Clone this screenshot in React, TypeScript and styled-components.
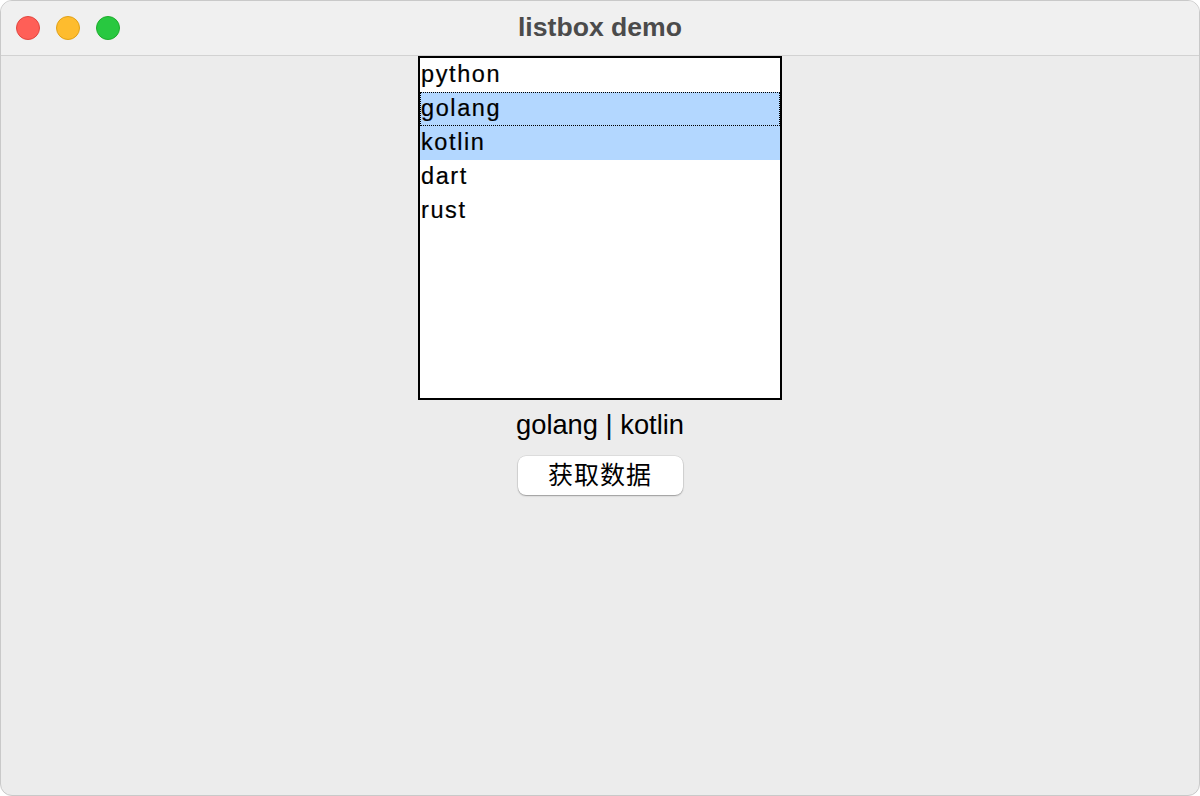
import React, { useState } from "react";
import styled, { createGlobalStyle } from "styled-components";

const GlobalStyle = createGlobalStyle`
  html, body {
    margin: 0;
    padding: 0;
    background: #ffffff;
  }
  #root {
    width: 1200px;
    height: 796px;
  }
`;

const items = ["python", "golang", "kotlin", "dart", "rust"];

const App = () => {
  const [selected] = useState<string[]>(["golang", "kotlin"]);
  const active = "golang";

  return (
    <>
      <GlobalStyle />
      <Window>
        <TitleBar>
          <Lights>
            <Light color="#ff5f57" edge="#e2463f" />
            <Light color="#febc2e" edge="#e1a116" />
            <Light color="#28c840" edge="#1dad2b" />
          </Lights>
          <Title>listbox demo</Title>
        </TitleBar>
        <Content>
          <ListBox>
            {items.map((item) => (
              <Row
                key={item}
                selected={selected.includes(item)}
                focused={item === active}
              >
                {item}
              </Row>
            ))}
          </ListBox>
          <Label>{selected.join(" | ")}</Label>
          <Button>获取数据</Button>
        </Content>
      </Window>
    </>
  );
};

export default App;

const Window = styled.div`
  width: 1200px;
  height: 796px;
  box-sizing: border-box;
  border-radius: 12px;
  border: 1px solid #c9c9c9;
  overflow: hidden;
  display: flex;
  flex-direction: column;
  background: #ececec;
`;

const TitleBar = styled.div`
  height: 54px;
  flex-shrink: 0;
  display: flex;
  align-items: center;
  justify-content: center;
  position: relative;
  background: #f0f0f0;
  border-bottom: 1px solid #d2d2d2;
`;

const Lights = styled.div`
  position: absolute;
  left: 15px;
  top: 15px;
  display: flex;
  gap: 16px;
`;

interface LightProps {
  color: string;
  edge: string;
}
const Light = styled.span<LightProps>`
  width: 24px;
  height: 24px;
  box-sizing: border-box;
  border-radius: 50%;
  background: ${({ color }) => color};
  border: 1px solid ${({ edge }) => edge};
`;

const Title = styled.div`
  font-family: "Liberation Sans", Arial, sans-serif;
  font-weight: bold;
  font-size: 26.6px;
  color: #4b4b4b;
  margin-bottom: 1px;
`;

const Content = styled.div`
  flex: 1;
  display: flex;
  flex-direction: column;
  align-items: center;
`;

const ListBox = styled.div`
  width: 364px;
  height: 344px;
  box-sizing: border-box;
  border: 2px solid #000;
  background: #fff;
  display: flex;
  flex-direction: column;
`;

interface RowProps {
  selected: boolean;
  focused: boolean;
}
const Row = styled.div<RowProps>`
  height: 34px;
  line-height: 33px;
  box-sizing: border-box;
  padding-left: 1px;
  font-family: "Liberation Sans", Arial, sans-serif;
  font-size: 23.5px;
  letter-spacing: 1.6px;
  color: #000;
  -webkit-text-stroke: 0.2px #000;
  background: ${({ selected }) => (selected ? "#b3d7ff" : "transparent")};
  outline: ${({ focused }) => (focused ? "1px dotted #000" : "none")};
  outline-offset: -1px;
`;

const Label = styled.div`
  height: 48px;
  line-height: 50px;
  font-family: "Liberation Sans", Arial, sans-serif;
  font-size: 27.3px;
  color: #000;
`;

const Button = styled.button`
  margin-top: 8px;
  width: 165px;
  height: 39px;
  box-sizing: border-box;
  border: none;
  border-radius: 8px;
  background: #fff;
  box-shadow: 0 0 0 0.5px rgba(0, 0, 0, 0.12), 0 1px 1.5px rgba(0, 0, 0, 0.3);
  font-family: "Noto Sans CJK SC", "Liberation Sans", sans-serif;
  font-size: 25px;
  letter-spacing: 1px;
  line-height: 1;
  padding: 0 0 4px;
  color: #000;
`;
